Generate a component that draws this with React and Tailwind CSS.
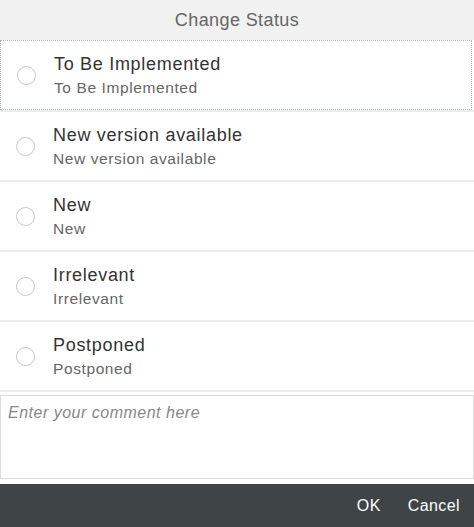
import React, { useState } from "react";

const statuses = [
  "To Be Implemented",
  "New version available",
  "New",
  "Irrelevant",
  "Postponed",
];

export default function App() {
  const [selected, setSelected] = useState(null);
  const [comment, setComment] = useState("");

  return (
    <div
      className="w-[474px] h-[527px] bg-white flex flex-col overflow-hidden"
      style={{ fontFamily: '"Liberation Sans", Arial, sans-serif' }}
    >
      <div className="h-[40px] shrink-0 bg-[#f1f1f1] flex items-center justify-center text-[18px] tracking-[0.4px] text-[#666]">
        Change Status
      </div>

      <ul className="flex flex-col">
        {statuses.map((s, i) => (
          <li
            key={s}
            onClick={() => setSelected(i)}
            className={
              i === 0
                ? "h-[70px] mr-[2px] flex items-center border border-dotted border-[#a9b6c4] cursor-pointer"
                : "h-[70px] flex items-center border-t-2 border-[#ececec] cursor-pointer"
            }
          >
            <span className="w-[53px] shrink-0 flex justify-center pr-[2px]">
              <span className="w-[19px] h-[19px] rounded-full border border-[#c8c8c8] flex items-center justify-center">
                {selected === i && <span className="w-[9px] h-[9px] rounded-full bg-[#3a6fb0]" />}
              </span>
            </span>
            <span className="flex flex-col">
              <span className="text-[18px] leading-[22px] tracking-[0.7px] text-[#333]">{s}</span>
              <span className="text-[15.5px] leading-[18px] mt-[4px] tracking-[0.6px] text-[#666]">{s}</span>
            </span>
          </li>
        ))}
      </ul>

      <div className="border-t-2 border-[#ececec] pt-[3px]">
        <textarea
          value={comment}
          onChange={(e) => setComment(e.target.value)}
          placeholder="Enter your comment here"
          className="block w-full h-[84px] resize-none border border-[#dcdcdc] px-[7px] py-[5px] text-[16px] tracking-[0.5px] text-[#333] placeholder:italic placeholder:text-[#888] outline-none"
        />
      </div>

      <div className="mt-auto h-[43px] bg-[#3f4447] flex items-center justify-end gap-[27px] pr-[14px] text-[16px] tracking-[0.4px] text-white">
        <button>OK</button>
        <button>Cancel</button>
      </div>
    </div>
  );
}
